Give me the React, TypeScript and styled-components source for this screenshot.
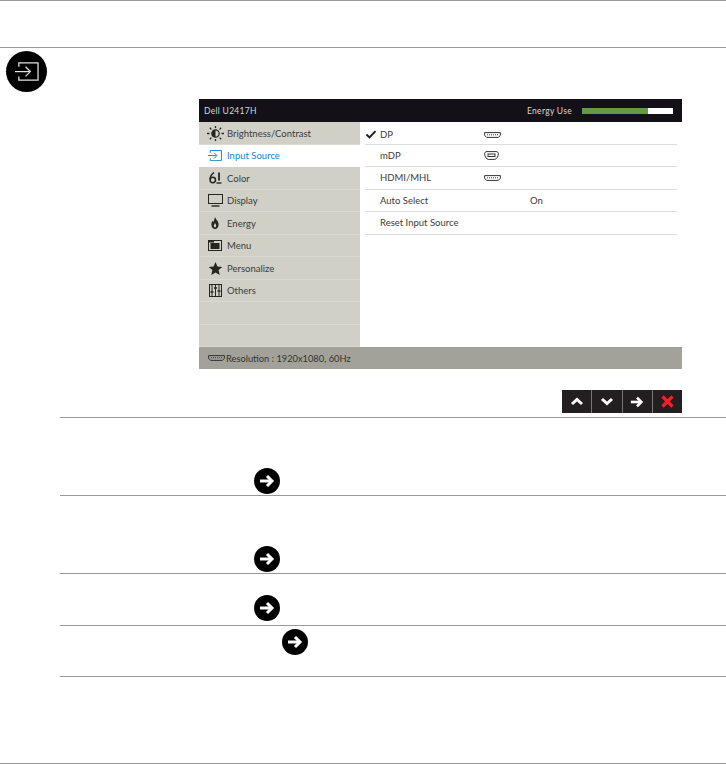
import React from "react";
import styled, { createGlobalStyle } from "styled-components";

const GlobalStyle = createGlobalStyle`
  html, body {
    margin: 0;
    padding: 0;
    background: #fff;
  }
  body {
    font-family: Lato, "Liberation Sans", sans-serif;
  }
`;

const Page = styled.div`
  width: 726px;
  height: 764px;
  overflow: hidden;
  display: flex;
  flex-direction: column;
`;

const TopRow = styled.div`
  height: 46px;
  flex: none;
  border-top: 1px solid #999;
`;

const MainRow = styled.div`
  height: 369px;
  flex: none;
  border-top: 1px solid #999;
  display: flex;
  align-items: flex-start;
`;

const BadgeIcon = styled.div`
  width: 41px;
  height: 41px;
  margin: 3px 0 0 6px;
  border-radius: 50%;
  background: #000;
  display: flex;
  align-items: center;
  justify-content: center;
  flex: none;
`;

const OsdColumn = styled.div`
  margin: 51px 0 0 152px;
  width: 483px;
  display: flex;
  flex-direction: column;
`;

const Osd = styled.div`
  height: 270px;
  display: flex;
  flex-direction: column;
`;

const OsdHeader = styled.div`
  height: 23px;
  flex: none;
  background: #131117;
  color: #d8d8d8;
  font-size: 8.5px;
  letter-spacing: 0.3px;
  display: flex;
  align-items: center;
  justify-content: space-between;
  padding: 0 9px 0 5px;
`;

const EnergyWrap = styled.div`
  display: flex;
  align-items: center;
  gap: 10px;
`;

const EnergyBar = styled.div`
  width: 91px;
  height: 6px;
  background: #fff;
`;

const EnergyFill = styled.div`
  height: 100%;
  background: #679a44;
`;

const OsdBody = styled.div`
  flex: 1;
  display: flex;
  min-height: 0;
`;

const Sidebar = styled.div`
  width: 161px;
  flex: none;
  background: #d0d0c7;
  display: grid;
  grid-template-rows: repeat(10, 22.5px);
`;

const SideItem = styled.div<{ $active?: boolean }>`
  display: flex;
  align-items: center;
  box-sizing: border-box;
  border-bottom: 1px solid ${(p) => (p.$active ? "#fff" : "#dadad2")};
  background: ${(p) => (p.$active ? "#fff" : "transparent")};
  color: ${(p) => (p.$active ? "#1d81b8" : "#3b3b38")};
  font-size: 9.5px;
  padding-top: 0.5px;
`;

const SideIcon = styled.span`
  width: 24px;
  padding-left: 4px;
  flex: none;
  display: flex;
  justify-content: center;
`;

const Panel = styled.div`
  flex: 1;
  background: #fff;
  padding: 0 5px;
  display: flex;
  flex-direction: column;
`;

const PanelRow = styled.div<{ $first?: boolean }>`
  height: 22.5px;
  flex: none;
  box-sizing: border-box;
  padding-top: ${(p) => (p.$first ? 4 : 0)}px;
  border-bottom: 1px solid #dcdcdc;
  display: grid;
  grid-template-columns: 15px 104px 46px 1fr;
  align-items: center;
  color: #3b3b38;
  font-size: 9.5px;
  white-space: nowrap;
`;

const OsdFooter = styled.div`
  height: 22px;
  flex: none;
  background: #a2a29a;
  color: #33332f;
  font-size: 9.3px;
  display: flex;
  align-items: center;
  gap: 1px;
  padding-left: 9px;
`;

const Keys = styled.div`
  width: 120px;
  height: 23px;
  align-self: flex-end;
  display: flex;
  gap: 1px;
  margin-top: 21px;
  background: #77777a;
`;

const Key = styled.div`
  flex: 1;
  background: #231f20;
  display: flex;
  align-items: center;
  justify-content: center;
`;

const StepRow = styled.div<{ $height: number; $circleLeft: number; $align: "start" | "end" }>`
  height: ${(p) => p.$height}px;
  margin-left: 60px;
  flex: none;
  border-top: 1px solid #999;
  display: flex;
  align-items: ${(p) => (p.$align === "end" ? "flex-end" : "flex-start")};
  padding-left: ${(p) => p.$circleLeft}px;
`;

const BottomRule = styled.div`
  height: 0;
  flex: none;
  border-top: 1px solid #999;
`;

const Arrow = styled.div<{ $up: number; $down: number }>`
  width: 26px;
  height: 26px;
  margin: ${(p) => p.$down}px 0 ${(p) => p.$up}px;
  border-radius: 50%;
  background: #000;
  display: flex;
  align-items: center;
  justify-content: center;
`;

const ArrowGlyph = ({ size = 16, color = "#fff" }: { size?: number; color?: string }) => (
  <svg width={size} height={size} viewBox="0 0 16 16" fill="none">
    <path d="M1 8h11.500" stroke={color} strokeWidth="3" />
    <path d="M8 3l5 5-5 5" stroke={color} strokeWidth="3" />
  </svg>
);

const InputIcon = ({ color, size, weight }: { color: string; size: number; weight: number }) => (
  <svg width={size} height={size * 0.8} viewBox="0 0 25 20" fill="none" stroke={color} strokeWidth={weight}>
    <path d="M4 5V1h20v18H4v-4" />
    <path d="M0 10h15" />
    <path d="M11 5l5 5-5 5" />
  </svg>
);

const SunIcon = () => (
  <svg width="17" height="15" viewBox="0 0 17 15">
    <circle cx="8.500" cy="7.500" r="3.700" fill="#d0d0c7" stroke="#26261f" strokeWidth="1.200" />
    <path d="M8.500 3.800a3.700 3.700 0 0 0 0 7.400z" fill="#26261f" />
    <path
      d="M8.500 0v2M8.500 13v2M0 7.500h2.500M14.500 7.500H17M2.800 1.800l1.600 1.600M12.600 11.600l1.600 1.600M2.800 13.200l1.600-1.600M12.600 3.400l1.600-1.600"
      stroke="#26261f"
      strokeWidth="1.300"
    />
  </svg>
);

const ColorIcon = () => (
  <svg width="13" height="12" viewBox="0 0 13 12" fill="none" stroke="#26261f">
    <path d="M5 .5C2.500 2.500 1 4.500 1 7.500" strokeWidth="1.500" />
    <circle cx="3.800" cy="8" r="2.700" strokeWidth="1.500" />
    <path d="M10 .5v8" strokeWidth="1.800" />
    <path d="M7.500 11h5" strokeWidth="1.400" />
  </svg>
);

const DisplayIcon = () => (
  <svg width="15" height="13" viewBox="0 0 15 13" fill="none" stroke="#26261f" strokeWidth="1">
    <rect x="0.500" y="0.500" width="14" height="9" />
    <path d="M3.500 12h8" strokeWidth="1.400" />
  </svg>
);

const FlameIcon = () => (
  <svg width="8" height="12" viewBox="0 0 10 13" preserveAspectRatio="none">
    <path
      fillRule="evenodd"
      d="M5 0c.5 2.500 4.500 4 4.500 8a4.500 5 0 0 1-9 0c0-2 1-3 1.500-4 .5.800.8 1.200 1.200 1.400C4 3.500 4.200 2 5 0zM5 6.500c-.8 1-1.500 2-1.500 3a1.500 1.800 0 0 0 3 0c0-1-.7-2-1.500-3z"
      fill="#26261f"
    />
  </svg>
);

const MenuIcon = () => (
  <svg width="14" height="11" viewBox="0 0 14 11">
    <rect x="0.500" y="0.500" width="13" height="10" fill="none" stroke="#26261f" />
    <rect x="2.500" y="3" width="9" height="6" fill="#26261f" />
    <rect x="1" y="1" width="5" height="1.500" fill="#26261f" />
  </svg>
);

const StarIcon = () => (
  <svg width="15" height="13" viewBox="0 0 14 13">
    <path d="M7 0l1.900 4.500 4.900.4-3.700 3.200 1.100 4.800L7 10.400l-4.200 2.500 1.100-4.800L.2 4.900l4.900-.4z" fill="#26261f" />
  </svg>
);

const OthersIcon = () => (
  <svg width="13" height="13" viewBox="0 0 13 13" fill="none" stroke="#26261f">
    <rect x="0.500" y="0.500" width="12" height="12" />
    <path d="M3 1v11M6.500 1v11M10 1v11" strokeWidth="1" />
    <path d="M1.500 8h3M5 4h3M8.500 7h3" strokeWidth="1.500" />
  </svg>
);

const PortIcon = ({ mini }: { mini?: boolean }) =>
  mini ? (
    <svg width="15" height="9" viewBox="0 0 15 9" fill="none" stroke="#333">
      <path d="M3 .6h9c1.500 0 2.400.8 2.400 2.200 0 2.200-2 5.600-3.600 5.600H4.200C2.600 8.400.6 5 .6 2.800.6 1.400 1.500.6 3 .6z" />
      <rect x="4" y="3" width="7" height="2.500" strokeWidth="1" />
    </svg>
  ) : (
    <svg width="17" height="6" viewBox="0 0 17 6" fill="none" stroke="#333">
      <path d="M.6.600h15.800v2.600l-2 2.200H2.600l-2-2.200z" />
      <path d="M3 2.800h11" strokeDasharray="1 1" />
    </svg>
  );

const CheckIcon = () => (
  <svg width="12" height="9" viewBox="0 0 12 10" fill="none">
    <path d="M1 5l3.300 3.200L11 1.300" stroke="#1d1d1b" strokeWidth="2.200" />
  </svg>
);

const menuItems = [
  { label: "Brightness/Contrast", icon: <SunIcon /> },
  { label: "Input Source", icon: <InputIcon color="#1d81b8" size={14} weight={1.7} />, active: true },
  { label: "Color", icon: <ColorIcon /> },
  { label: "Display", icon: <DisplayIcon /> },
  { label: "Energy", icon: <FlameIcon /> },
  { label: "Menu", icon: <MenuIcon /> },
  { label: "Personalize", icon: <StarIcon /> },
  { label: "Others", icon: <OthersIcon /> },
  { label: "" },
  { label: "" },
];

const steps = [
  { height: 77, left: 194, down: 0, up: 1, align: "end" as const },
  { height: 77, left: 194, down: 0, up: 1, align: "end" as const },
  { height: 51, left: 194, down: 0, up: 4, align: "end" as const },
  { height: 50, left: 222, down: 3, up: 0, align: "start" as const },
];

export default function App() {
  return (
    <Page>
      <GlobalStyle />
      <TopRow />
      <MainRow>
        <BadgeIcon>
          <InputIcon color="#e4e4e4" size={24} weight={1.3} />
        </BadgeIcon>
        <OsdColumn>
          <Osd>
            <OsdHeader>
              <span>Dell U2417H</span>
              <EnergyWrap>
                <span>Energy Use</span>
                <EnergyBar>
                  <EnergyFill style={{ width: "72%" }} />
                </EnergyBar>
              </EnergyWrap>
            </OsdHeader>
            <OsdBody>
              <Sidebar>
                {menuItems.map((item, i) => (
                  <SideItem key={i} $active={item.active}>
                    <SideIcon>{item.icon}</SideIcon>
                    {item.label}
                  </SideItem>
                ))}
              </Sidebar>
              <Panel>
                <PanelRow $first>
                  <CheckIcon />
                  <span>DP</span>
                  <PortIcon />
                </PanelRow>
                <PanelRow>
                  <span />
                  <span>mDP</span>
                  <PortIcon mini />
                </PanelRow>
                <PanelRow>
                  <span />
                  <span>HDMI/MHL</span>
                  <PortIcon />
                </PanelRow>
                <PanelRow>
                  <span />
                  <span>Auto Select</span>
                  <span />
                  <span>On</span>
                </PanelRow>
                <PanelRow>
                  <span />
                  <span>Reset Input Source</span>
                </PanelRow>
              </Panel>
            </OsdBody>
            <OsdFooter>
              <PortIcon />
              <span>Resolution : 1920x1080, 60Hz</span>
            </OsdFooter>
          </Osd>
          <Keys>
            <Key>
              <svg width="14" height="9" viewBox="0 0 14 9" fill="none">
                <path d="M2 7l5-4.500L12 7" stroke="#fff" strokeWidth="3" />
              </svg>
            </Key>
            <Key>
              <svg width="14" height="9" viewBox="0 0 14 9" fill="none">
                <path d="M2 2l5 4.500L12 2" stroke="#fff" strokeWidth="3" />
              </svg>
            </Key>
            <Key>
              <ArrowGlyph size={14} />
            </Key>
            <Key>
              <svg width="13" height="13" viewBox="0 0 13 13" fill="none">
                <path d="M1.500 1.500l10 10M11.500 1.500l-10 10" stroke="#e12a26" strokeWidth="3.200" />
              </svg>
            </Key>
          </Keys>
        </OsdColumn>
      </MainRow>
      {steps.map((s, i) => (
        <StepRow key={i} $height={s.height} $circleLeft={s.left} $align={s.align}>
          <Arrow $up={s.up} $down={s.down}>
            <ArrowGlyph />
          </Arrow>
        </StepRow>
      ))}
      <StepRow $height={86} $circleLeft={0} $align="start" />
      <BottomRule />
    </Page>
  );
}
